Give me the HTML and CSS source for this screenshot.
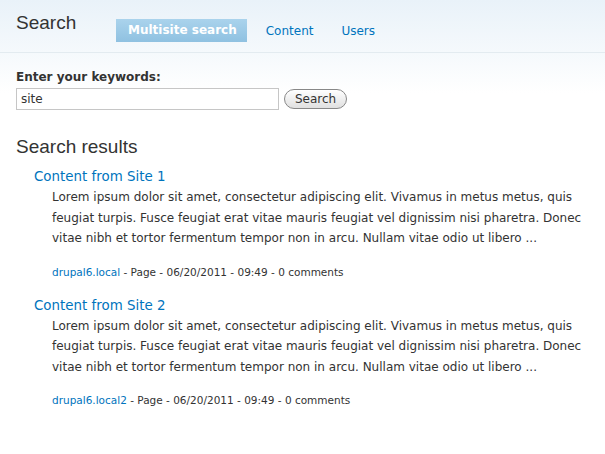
FILE: index.html
```html
<!DOCTYPE html>
<html>
<head>
<meta charset="utf-8">
<link rel="stylesheet" href="styles.css">
</head>
<body>
<div class="header">
  <h1 class="title">Search</h1>
  <ul class="tabs">
    <li><a class="tab active" href="#">Multisite search</a></li>
    <li><a class="tab" href="#">Content</a></li>
    <li><a class="tab" href="#">Users</a></li>
  </ul>
</div>
<div class="content">
  <form class="search-form">
    <label class="label">Enter your keywords:</label>
    <div class="row">
      <input class="field" type="text" value="site">
      <button class="btn" type="button">Search</button>
    </div>
  </form>
  <h2 class="results-title">Search results</h2>
  <dl class="results">
    <dt class="result-title"><a href="#">Content from Site 1</a></dt>
    <dd class="result-body">
      <p class="snippet">Lorem ipsum dolor sit amet, consectetur adipiscing elit. Vivamus in metus metus, quis feugiat turpis. Fusce feugiat erat vitae mauris feugiat vel dignissim nisi pharetra. Donec vitae nibh et tortor fermentum tempor non in arcu. Nullam vitae odio ut libero ...</p>
      <p class="meta"><a href="#">drupal6.local</a> - Page - 06/20/2011 - 09:49 - 0 comments</p>
    </dd>
    <dt class="result-title"><a href="#">Content from Site 2</a></dt>
    <dd class="result-body">
      <p class="snippet">Lorem ipsum dolor sit amet, consectetur adipiscing elit. Vivamus in metus metus, quis feugiat turpis. Fusce feugiat erat vitae mauris feugiat vel dignissim nisi pharetra. Donec vitae nibh et tortor fermentum tempor non in arcu. Nullam vitae odio ut libero ...</p>
      <p class="meta"><a href="#">drupal6.local2</a> - Page - 06/20/2011 - 09:49 - 0 comments</p>
    </dd>
  </dl>
</div>
</body>
</html>
```
FILE: styles.css
```css
html, body {
  margin: 0;
  padding: 0;
  background: #fff;
}
body {
  font-family: "DejaVu Sans", Verdana, sans-serif;
  font-size: 12px;
  color: #333;
}
a {
  color: #0074bd;
  text-decoration: none;
}
.header {
  display: flex;
  align-items: flex-start;
  height: 52px;
  border-bottom: 1px solid #e3ebf0;
  background: linear-gradient(#e9f2f9, #f5f9fc);
  padding: 0 0 0 16px;
  box-sizing: content-box;
}
.title {
  margin: 12px 0 0;
  font-family: "Liberation Sans", Arial, sans-serif;
  font-weight: normal;
  font-size: 19px;
  color: #333;
  width: 100px;
}
.tabs {
  display: flex;
  list-style: none;
  margin: 19px 0 0;
  padding: 0;
}
.tab {
  display: block;
  height: 23px;
  line-height: 25px;
  padding: 0 11px 0 11px;
  margin-right: 6px;
  font-size: 12px;
}
.tab.active {
  background: linear-gradient(#aad3ec, #8fc1e1);
  color: #fff;
  font-weight: bold;
  line-height: 23px;
  padding: 0 10px 0 12px;
  margin-right: 8px;
}
.content {
  padding: 17px 16px 0;
  background: linear-gradient(#f5f9fc, #fff 40px);
}
.search-form {
  margin: 0;
}
.label {
  display: block;
  font-weight: bold;
  font-size: 12px;
  color: #333;
  margin-bottom: 4px;
}
.row {
  display: flex;
  align-items: center;
  gap: 5px;
}
.field {
  width: 263px;
  height: 22px;
  box-sizing: border-box;
  border: 1px solid #c6c6c6;
  padding: 0 4px;
  font-family: "DejaVu Sans", Verdana, sans-serif;
  font-size: 12px;
  color: #333;
  margin: 0;
}
.btn {
  height: 20px;
  box-sizing: border-box;
  padding: 0 10px;
  border: 1px solid #888;
  border-radius: 10px;
  background: linear-gradient(#fff, #ececec 60%, #e0e0e0);
  font-family: "DejaVu Sans", Verdana, sans-serif;
  font-size: 12px;
  color: #333;
  margin: 0;
}
.results-title {
  margin: 26px 0 0;
  font-family: "Liberation Sans", Arial, sans-serif;
  font-weight: normal;
  font-size: 19px;
  color: #333;
}
.results {
  margin: 11px 0 0 18px;
}
.result-title {
  font-size: 13.4px;
  margin: 0;
}
.result-body {
  margin: 0 0 0 18px;
}
.snippet {
  margin: 0;
  line-height: 20.5px;
  padding-top: 3px;
}
.meta {
  font-size: 10.5px;
  margin: 17px 0 20px;
}
```
